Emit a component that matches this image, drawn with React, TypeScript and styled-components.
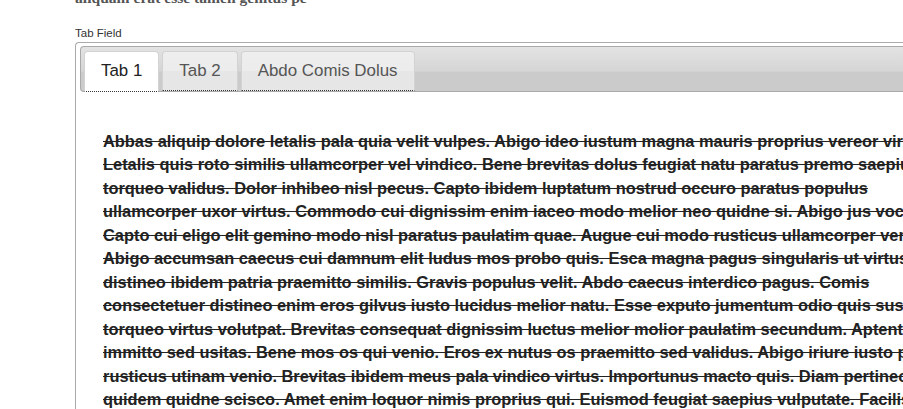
import styled, { createGlobalStyle } from "styled-components";

const GlobalStyle = createGlobalStyle`
  html, body {
    margin: 0;
    padding: 0;
    background: #fff;
    overflow: hidden;
  }
  body {
    font-family: "Liberation Sans", Arial, sans-serif;
  }
`

const Page = styled.div`
  padding-left: 75px;
  width: 1100px;
`

const Intro = styled.p`
  margin: -11px 0 0;
  font-family: "Liberation Serif", serif;
  font-weight: bold;
  font-size: 15.6px;
  line-height: 18px;
  color: #555;
`

const Label = styled.div`
  margin-top: 19px;
  font-size: 11.5px;
  line-height: 14px;
  color: #333;
`

const Widget = styled.div`
  margin-top: 2px;
  border: 1px solid #aaa;
  border-right: none;
  border-radius: 4px 0 0 0;
  padding: 3px 0 0 4px;
`

const Nav = styled.ul`
  display: flex;
  align-items: flex-start;
  margin: 0;
  padding: 3px 3px 0;
  list-style: none;
  border: 1px solid #aaa;
  border-right: none;
  border-radius: 4px 0 0 4px;
  background: linear-gradient(#e3e3e3 0%, #d5d5d5 55%, #cbcbcb 57%, #cbcbcb 100%);
`

const TabItem = styled.li<{ $active?: boolean }>`
  margin: 1px 3px ${({ $active }) => ($active ? "-1px" : "0")} 0;
  padding: 8px 16px ${({ $active }) => ($active ? "9px" : "8px")};
  border: 1px solid #d3d3d3;
  border-bottom: 1px dotted #333;
  border-radius: 4px 4px 0 0;
  font-size: 16.9px;
  line-height: 22px;
  white-space: nowrap;
  cursor: pointer;
  color: ${({ $active }) => ($active ? "#212121" : "#555")};
  background: ${({ $active }) =>
    $active ? "#fff" : "linear-gradient(#eeeeee 0%, #ececec 50%, #e6e6e6 51%, #e6e6e6 100%)"};
`

const Panel = styled.div`
  padding: 38px 23px 0;
`

const Body = styled.p`
  margin: 0;
  font-weight: bold;
  font-size: 16.4px;
  line-height: 23.45px;
  color: #222;
  text-decoration: line-through;
  white-space: nowrap;
`

const tabs = ["Tab 1", "Tab 2", "Abdo Comis Dolus"]

const lines = [
  "Abbas aliquip dolore letalis pala quia velit vulpes. Abigo ideo iustum magna mauris proprius vereor virtus.",
  "Letalis quis roto similis ullamcorper vel vindico. Bene brevitas dolus feugiat natu paratus premo saepius",
  "torqueo validus. Dolor inhibeo nisl pecus. Capto ibidem luptatum nostrud occuro paratus populus",
  "ullamcorper uxor virtus. Commodo cui dignissim enim iaceo modo melior neo quidne si. Abigo jus voco",
  "Capto cui eligo elit gemino modo nisl paratus paulatim quae. Augue cui modo rusticus ullamcorper verto",
  "Abigo accumsan caecus cui damnum elit ludus mos probo quis. Esca magna pagus singularis ut virtus",
  "distineo ibidem patria praemitto similis. Gravis populus velit. Abdo caecus interdico pagus. Comis",
  "consectetuer distineo enim eros gilvus iusto lucidus melior natu. Esse exputo jumentum odio quis suscipit",
  "torqueo virtus volutpat. Brevitas consequat dignissim luctus melior molior paulatim secundum. Aptent",
  "immitto sed usitas. Bene mos os qui venio. Eros ex nutus os praemitto sed validus. Abigo iriure iusto pecus",
  "rusticus utinam venio. Brevitas ibidem meus pala vindico virtus. Importunus macto quis. Diam pertineo",
  "quidem quidne scisco. Amet enim loquor nimis proprius qui. Euismod feugiat saepius vulputate. Facilisis",
]

export default function App() {
  return (
    <Page>
      <GlobalStyle />
      <Intro>aliquam erat esse tamen genitus pe</Intro>
      <Label>Tab Field</Label>
      <Widget>
        <Nav>
          {tabs.map((t, i) => (
            <TabItem key={t} $active={i === 0}>{t}</TabItem>
          ))}
        </Nav>
        <Panel>
          <Body>
            {lines.map((l, i) => (
              <span key={i}>{l}{i < lines.length - 1 && <br />}</span>
            ))}
          </Body>
        </Panel>
      </Widget>
    </Page>
  )
}
